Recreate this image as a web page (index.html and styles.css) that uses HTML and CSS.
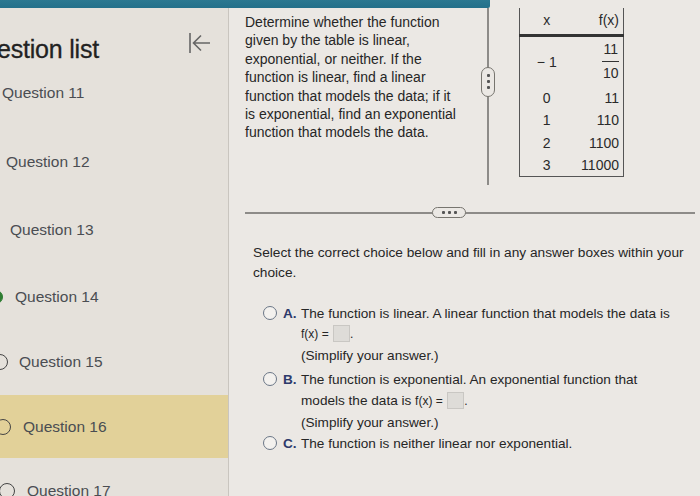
FILE: index.html
```html
<!DOCTYPE html>
<html>
<head>
<meta charset="utf-8">
<link rel="stylesheet" href="styles.css">
</head>
<body>
<div class="topbar"></div>
<div class="page">
  <aside class="sidebar">
    <div class="side-head">
      <h1 class="side-title">estion list</h1>
      <svg class="collapse" width="24" height="24" viewBox="0 0 24 24">
        <path d="M2 2 V22 M22 12 H6 M13 4.5 L5.5 12 L13 19.5" fill="none" stroke="#666" stroke-width="1.6"/>
      </svg>
    </div>
    <ul class="qlist">
      <li class="q q11"><span class="qtxt">Question 11</span></li>
      <li class="q q12"><span class="qtxt">Question 12</span></li>
      <li class="q q13"><span class="qtxt">Question 13</span></li>
      <li class="q q14"><span class="dot done"></span><span class="qtxt">Question 14</span></li>
      <li class="q q15"><span class="dot"></span><span class="qtxt">Question 15</span></li>
      <li class="q q16 current"><span class="dot"></span><span class="qtxt">Question 16</span></li>
      <li class="q q17"><span class="dot"></span><span class="qtxt">Question 17</span></li>
    </ul>
  </aside>
  <main class="main">
    <section class="problem">
      <p class="prompt">Determine whether the function given by the table is linear, exponential, or neither. If the function is linear, find a linear function that models the data; if it is exponential, find an exponential function that models the data.</p>
      <div class="vdivider"><span class="vpill"><i></i><i></i><i></i></span></div>
      <table class="data">
        <thead><tr><th class="cx">x</th><th class="cf">f(x)</th></tr></thead>
        <tbody>
          <tr class="frac-row"><td class="cx">− 1</td><td class="cf"><span class="frac"><span class="num">11</span><span class="den">10</span></span></td></tr>
          <tr><td class="cx">0</td><td class="cf">11</td></tr>
          <tr><td class="cx">1</td><td class="cf">110</td></tr>
          <tr><td class="cx">2</td><td class="cf">1100</td></tr>
          <tr><td class="cx">3</td><td class="cf">11000</td></tr>
        </tbody>
      </table>
    </section>
    <div class="hdivider"><span class="hpill"><i></i><i></i><i></i></span></div>
    <p class="instr">Select the correct choice below and fill in any answer boxes within your choice.</p>
    <div class="choices">
      <div class="choice">
        <span class="radio"></span><span class="letter">A.</span>
        <div class="ctext">
          <div>The function is linear. A linear function that models the data is</div>
          <div class="eq">f(x) = <span class="box"></span>.</div>
          <div>(Simplify your answer.)</div>
        </div>
      </div>
      <div class="choice">
        <span class="radio"></span><span class="letter">B.</span>
        <div class="ctext">
          <div>The function is exponential. An exponential function that</div>
          <div>models the data is <span class="eq">f(x) = <span class="box"></span>.</span></div>
          <div>(Simplify your answer.)</div>
        </div>
      </div>
      <div class="choice">
        <span class="radio"></span><span class="letter">C.</span>
        <div class="ctext">
          <div>The function is neither linear nor exponential.</div>
        </div>
      </div>
    </div>
  </main>
</div>
</body>
</html>
```
FILE: styles.css
```css
* { box-sizing: border-box; }
html, body { margin: 0; padding: 0; }
body {
  width: 700px; height: 496px; overflow: hidden;
  background: #ebe8e4;
  font-family: "Liberation Sans", Arial, sans-serif;
  color: #2a2a2a;
}
.topbar {
  height: 8px; width: 490px;
  background: linear-gradient(180deg, #2b7891 0%, #23708a 100%);
  border-bottom-right-radius: 2px;
}
.page { display: flex; height: 488px; overflow: hidden; }
.sidebar {
  width: 229px; flex: none;
  background: #e5e1db;
  border-right: 1px solid #c9c5bf;
}
.side-head {
  display: flex; align-items: center; justify-content: space-between;
  padding: 22px 16px 0 0;
  height: 60px;
}
.side-title {
  margin: 0; font-size: 25px; font-weight: normal; color: #222;
  letter-spacing: -0.2px; margin-left: -3px;
  -webkit-text-stroke: 0.3px #222;
}
.collapse { margin-top: -12px; }
.qlist { list-style: none; margin: 0; padding: 0; }
.q {
  height: 66px; display: flex; align-items: center;
  font-size: 15.5px; color: #4a4d52;
  position: relative;
}
.q11 { padding-left: 2px; margin-top: -8px; }
.q12 { padding-left: 6px; margin-top: 3px; }
.q13 { padding-left: 10px; margin-top: 2px; }
.q14 { padding-left: 15px; margin-top: 1px; }
.q15 { padding-left: 19px; margin-top: -1px; }
.q16 { padding-left: 23px; }
.q17 { padding-left: 27px; }
.current { background: #e2d199; height: 63px; }
.dot {
  position: absolute; top: 50%; margin-top: -8px;
  width: 16px; height: 16px; border-radius: 50%;
  border: 1.6px solid #444;
}
.q14 .dot { left: -11px; background: #2e7d32; border-color: #2e7d32; width: 14px; height: 14px; margin-top: -7px; }
.q15 .dot { left: -8px; }
.q16 .dot { left: -5px; }
.q17 .dot { left: -1px; }

.main { flex: 1; padding: 0 0 0 16px; }
.problem { display: flex; align-items: flex-start; height: 197px; }
.prompt {
  margin: 5px 0 0 0; width: 214px; flex: none;
  font-size: 14px; line-height: 18.4px; color: #262626;
}
.vdivider {
  width: 18px; height: 185px; margin: -8px 0 0 20px;
  position: relative; flex: none;
  display: flex; justify-content: center; align-items: center;
}
.vdivider::before {
  content: ""; position: absolute; left: 8px; top: 0; bottom: 0;
  width: 1.5px; background: #8d8b88;
}
.vpill {
  position: relative; margin-top: -22px;
  width: 14px; height: 30px; border: 1.5px solid #77756f; border-radius: 7px;
  background: #ebe8e4;
  display: flex; flex-direction: column; align-items: center; justify-content: center; gap: 3px;
}
.vpill i, .hpill i { display: block; width: 3px; height: 3px; background: #555; border-radius: 1px; }
.data {
  margin: -4px 0 0 22px;
  border-collapse: collapse; border: 1.5px solid #555;
  font-size: 14px; color: #2a2a2a;
  width: 105px;
}
.data th { font-weight: normal; height: 31px; border-bottom: 3px solid #333; padding: 0 4px; }
.data td { padding: 0 4px; height: 22.5px; }
.data .cx { text-align: center; width: 54px; }
.data .cf { text-align: right; }
.frac-row td { height: 51px; padding-top: 0; }
.frac { display: inline-flex; flex-direction: column; align-items: center; line-height: 19px; }
.frac .num { border-bottom: 1.2px solid #333; padding: 0 1px 2px; }
.frac .den { padding-top: 2px; }

.hdivider {
  position: relative; height: 14px; margin: 0 5px 0 0;
  display: flex; align-items: center;
}
.hdivider::before {
  content: ""; position: absolute; left: 0; right: 0; top: 7px; height: 1.5px; background: #8d8b88;
}
.hpill {
  position: relative; margin-left: 187px;
  width: 34px; height: 11px; border: 1.5px solid #77756f; border-radius: 6px;
  background: #ebe8e4;
  display: flex; align-items: center; justify-content: center; gap: 3px;
}
.instr {
  margin: 24px 0 0 8px; width: 445px;
  font-size: 13.7px; line-height: 20px; color: #262626;
}
.choices { margin: 20px 0 0 18px; }
.choice { display: flex; align-items: flex-start; margin-bottom: 3px; font-size: 13.6px; line-height: 21px; color: #262626; }
.choice:last-child { margin-top: -3px; }
.radio {
  flex: none; width: 14px; height: 14px; border-radius: 50%;
  border: 1.5px solid #6a7686; margin-top: 3px; background: #f3f1ee;
}
.letter { width: 24px; flex: none; font-weight: bold; color: #2d3a6b; padding-left: 6px; }
.ctext { flex: 1; }
.eq { font-size: 12px; }
.box {
  display: inline-block; width: 17px; height: 17px; vertical-align: -4px;
  background: #dedcd8; border: 1px solid #c9c7c3; margin-left: 1px;
}
```
